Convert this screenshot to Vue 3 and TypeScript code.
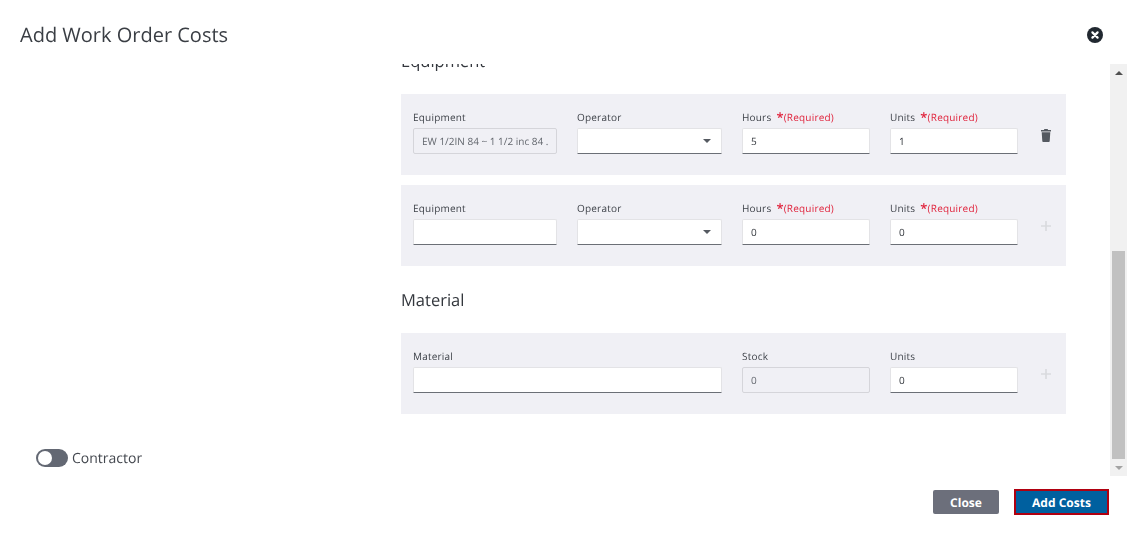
<script setup lang="ts">
interface Field { label: string; value?: string; required?: boolean; disabled?: boolean; select?: boolean; span?: boolean }
interface Row { fields: Field[]; action: 'trash' | 'plus' }

const equipmentRows: Row[] = [
  {
    action: 'trash',
    fields: [
      { label: 'Equipment', value: 'EW 1/2IN 84 ~ 1 1/2 inc 84 ...', disabled: true },
      { label: 'Operator', select: true },
      { label: 'Hours', value: '5', required: true },
      { label: 'Units', value: '1', required: true },
    ],
  },
  {
    action: 'plus',
    fields: [
      { label: 'Equipment' },
      { label: 'Operator', select: true },
      { label: 'Hours', value: '0', required: true },
      { label: 'Units', value: '0', required: true },
    ],
  },
]
const materialRows: Row[] = [
  {
    action: 'plus',
    fields: [
      { label: 'Material', span: true },
      { label: 'Stock', value: '0', disabled: true },
      { label: 'Units', value: '0' },
    ],
  },
]
const sections = [
  { title: 'Equipment', rows: equipmentRows },
  { title: 'Material', rows: materialRows },
]
</script>

<template>
  <div class="dialog">
    <header class="head">
      <h1 class="title">Add Work Order Costs</h1>
      <button class="close-x" aria-label="Close">
        <svg width="16" height="16" viewBox="0 0 16 16">
          <circle cx="8" cy="8" r="8" fill="#212830" />
          <path d="M5.4 5.4l5.2 5.2M10.6 5.4l-5.2 5.2" stroke="#fff" stroke-width="2.2" stroke-linecap="round" />
        </svg>
      </button>
    </header>

    <div class="body">
      <aside class="side">
        <label class="toggle-wrap">
          <span class="toggle"><span class="knob"></span></span>
          <span class="toggle-text">Contractor</span>
        </label>
      </aside>

      <div class="scroller">
        <div class="content">
          <section v-for="s in sections" :key="s.title" class="section">
            <h2 class="section-title">{{ s.title }}</h2>
            <div v-for="(r, i) in s.rows" :key="i" class="row">
              <div
                v-for="f in r.fields"
                :key="f.label"
                class="field"
                :class="{ wide: f.span }"
              >
                <div class="label">
                  {{ f.label }}<span v-if="f.required" class="req"><span class="star">*</span>(Required)</span>
                </div>
                <div class="input" :class="{ disabled: f.disabled, select: f.select }">
                  <span class="value">{{ f.value }}</span>
                  <span v-if="f.select" class="caret"></span>
                </div>
              </div>
              <div class="action" :class="r.action">
                <svg v-if="r.action === 'trash'" width="10" height="13" viewBox="0 0 10 13">
                  <path fill="#555a61" d="M3.4 0h3.2l.5 1H10v1.4H0V1h2.900zM.7 3.200h8.600l-.6 9a.9.9 0 0 1-.9.8H2.200a.9.9 0 0 1-.9-.8z" />
                </svg>
                <svg v-else width="10" height="10" viewBox="0 0 10 10">
                  <path d="M5 0v10M0 5h10" stroke="#d9dade" stroke-width="1.600" />
                </svg>
              </div>
            </div>
          </section>
        </div>
        <div class="scrollbar">
          <span class="arrow up"></span>
          <div class="track"><div class="thumb"></div></div>
          <span class="arrow down"></span>
        </div>
      </div>
    </div>

    <footer class="foot">
      <button class="btn close">Close</button>
      <button class="btn add">Add Costs</button>
    </footer>
  </div>
</template>

<style>
html, body { margin: 0; background: #fff; }
</style>

<style scoped>
.dialog {
  width: 1127px;
  height: 540px;
  display: flex;
  flex-direction: column;
  font-family: "Open Sans", "Liberation Sans", sans-serif;
  text-rendering: geometricPrecision;
  color: #33373d;
  will-change: opacity;
  overflow: hidden;
}
.head {
  height: 64px;
  flex: none;
  display: flex;
  align-items: center;
  justify-content: space-between;
  padding: 5px 24px 0 20px;
  box-sizing: border-box;
}
.title { margin: 0; font-size: 20px; font-weight: 400; color: #3a3e44; }
.close-x { all: unset; display: flex; margin-top: 1px; }
.body { flex: none; height: 412px; display: flex; }
.side {
  width: 401px;
  flex: none;
  display: flex;
  align-items: flex-end;
  padding: 0 0 8px 36px;
  box-sizing: border-box;
}
.toggle-wrap { display: flex; align-items: center; gap: 4px; }
.toggle {
  width: 32px;
  height: 18px;
  border-radius: 9px;
  background: #636873;
  display: flex;
  align-items: center;
  padding-left: 2px;
  box-sizing: border-box;
}
.knob { width: 14px; height: 14px; border-radius: 50%; background: #fff; }
.toggle-text { font-size: 14px; line-height: 18px; padding-top: 2px; color: #44484f; }
.scroller { flex: 1; display: flex; overflow: hidden; }
.content { width: 665px; flex: none; margin-top: -15px; }
.section-title {
  margin: 0;
  height: 45px;
  font-size: 16.500px;
  line-height: 24px;
  font-weight: 400;
  color: #33373d;
}
.section + .section { margin-top: 22px; }
.row {
  height: 81px;
  margin-bottom: 10px;
  background: #f0f0f5;
  display: grid;
  grid-template-columns: 144px 145px 128px 128px 1fr;
  column-gap: 20px;
  padding-left: 12px;
  box-sizing: border-box;
}
.section:last-child .row { grid-template-columns: 309px 128px 128px 1fr; }
.field { padding-top: 16px; }
.label {
  height: 18px;
  font-size: 10px;
  line-height: 14px;
  letter-spacing: 0.2px;
  color: #3f434a;
  white-space: nowrap;
}
.req { color: #e0233c; margin-left: 5px; }
.star { font-size: 13px; font-weight: 600; vertical-align: -1px; line-height: 10px; }
.input {
  height: 26px;
  box-sizing: border-box;
  background: #fff;
  border: 1px solid #e3e3e6;
  border-bottom: 1px solid #6b6f76;
  border-radius: 2px 2px 0 0;
  padding: 0 8px;
  display: flex;
  align-items: center;
  font-size: 10px;
  color: #33373d;
  overflow: hidden;
}
.input.disabled {
  background: #f0f0f5;
  border: 1px solid #d5d5da;
  border-radius: 2px;
  color: #63676e;
}
.value { white-space: nowrap; overflow: hidden; flex: 1; }
.caret {
  width: 0;
  height: 0;
  margin-right: 2px;
  border-left: 4px solid transparent;
  border-right: 4px solid transparent;
  border-top: 4px solid #555a61;
}
.action { display: flex; justify-content: center; padding-top: 35px; margin-left: -12px; width: 40px; box-sizing: border-box; }
.action.plus { padding-top: 36px; }
.scrollbar {
  width: 17px;
  margin-left: 44px;
  flex: none;
  background: #f1f1f1;
  display: flex;
  flex-direction: column;
  align-items: center;
}
.arrow { height: 17px; flex: none; display: flex; align-items: center; width: 0; }
.arrow.up::before {
  content: "";
  border-left: 4px solid transparent;
  border-right: 4px solid transparent;
  border-bottom: 4px solid #505050;
  margin-left: -4px;
}
.arrow.down::before {
  content: "";
  border-left: 4px solid transparent;
  border-right: 4px solid transparent;
  border-top: 4px solid #a3a3a3;
  margin-left: -4px;
}
.track { flex: 1; width: 13px; }
.thumb { margin-top: 170px; height: 208px; background: #c1c1c1; }
.foot {
  flex: 1;
  display: flex;
  justify-content: flex-end;
  align-items: flex-start;
  gap: 15px;
  padding: 14px 18px 0 0;
}
.btn {
  all: unset;
  box-sizing: border-box;
  height: 24px;
  display: flex;
  align-items: center;
  justify-content: center;
  font-size: 12px;
  font-weight: 700;
  color: #fff;
  border-radius: 2px;
}
.close { width: 66px; background: #6c6f7b; }
.add { width: 95px; height: 26px; margin-top: -1px; background: #00609f; border: 2px solid #b00010; border-radius: 0; }
</style>
